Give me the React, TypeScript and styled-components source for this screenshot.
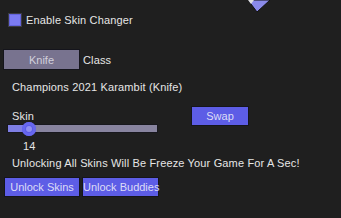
import React from 'react';
import styled, { createGlobalStyle } from 'styled-components';

const GlobalStyle = createGlobalStyle`
    html, body {
        margin: 0;
        padding: 0;
        background: #1f1f1f;
        overflow: hidden;
    }
    body {
        font-family: 'Liberation Sans', Arial, sans-serif;
        font-size: 11px;
        letter-spacing: 0.15px;
        color: #e6e6e6;
    }
`;

const Window = styled.div`
    position: relative;
    width: 341px;
    height: 218px;
    padding: 13px 0 0 8px;
    box-sizing: border-box;
`;

const Cursor = styled.svg`
    position: absolute;
    left: 247px;
    top: 0;
`;

const CheckRow = styled.label`
    display: flex;
    align-items: center;
    gap: 4px;
    height: 14px;
`;

const CheckBox = styled.span`
    width: 12px;
    height: 12px;
    border: 1px solid #3c3c44;
    background: #7b7bf2;
    box-shadow: inset 0 0 0 1px #6464dc;
`;

const Label = styled.span<{ indent?: number }>`
    display: block;
    line-height: 14px;
    white-space: nowrap;
    ${p => p.indent !== undefined && `margin-left: ${p.indent}px;`}
`;

const ClassRow = styled.div`
    display: flex;
    align-items: center;
    gap: 3px;
    margin: 22px 0 0 -5px;
`;

const Button = styled.button<{ variant?: 'gray' | 'accent'; w: number; h?: number }>`
    width: ${p => p.w}px;
    height: ${p => p.h ?? 20}px;
    padding: 0;
    border: 1px solid #15151c;
    font-family: inherit;
    font-size: 11px;
    letter-spacing: 0;
    white-space: nowrap;
    overflow: visible;
    background: ${p => (p.variant === 'gray' ? '#78738f' : '#5d5de6')};
    color: ${p => (p.variant === 'gray' ? '#d2d0dc' : '#dcdcf6')};
    cursor: pointer;
`;

const Title = styled(Label)`
    margin: 10px 0 0 4px;
`;

const SkinRow = styled.div`
    display: flex;
    align-items: flex-start;
    margin-top: 12px;
`;

const SliderColumn = styled.div`
    width: 151px;
    margin-left: -1px;
`;

const Track = styled.div`
    position: relative;
    height: 9px;
    margin-top: 1px;
    background: #88849f;
    border: 1px solid #18181e;
    box-sizing: border-box;
`;

const Fill = styled.div`
    height: 100%;
    background: #7f7fe4;
`;

const Knob = styled.div`
    position: absolute;
    top: 50%;
    width: 14px;
    height: 14px;
    margin: -7px 0 0 -7px;
    border-radius: 50%;
    background: #5b5be8;
    box-shadow: inset 0 0 0 3px #6767ee;
    &::after {
        content: '';
        position: absolute;
        inset: 4px;
        border-radius: 50%;
        background: #8f8ff0;
    }
`;

const SwapButton = styled(Button)`
    margin-left: 33px;
`;

const Warning = styled(Label)`
    margin: 3px 0 0 4px;
`;

const ButtonRow = styled.div`
    display: flex;
    gap: 2px;
    margin: 7px 0 0 -4px;
`;

const value = 14;
const min = 0;
const max = 100;

export default function App() {
    const pct = ((value - min) / (max - min)) * 100;
    return (
        <Window>
            <GlobalStyle />
            <Cursor width="25" height="14" viewBox="0 0 25 14">
                <polygon points="1,0 10,12 23,0" fill="#8a8aea" stroke="#111" strokeWidth="1" />
                <polygon points="1,0 4,4 7,0" fill="#e0e0e0" />
            </Cursor>
            <CheckRow>
                <CheckBox />
                <Label>Enable Skin Changer</Label>
            </CheckRow>
            <ClassRow>
                <Button variant="gray" w={77} h={21}>Knife</Button>
                <Label>Class</Label>
            </ClassRow>
            <Title>Champions 2021 Karambit (Knife)</Title>
            <SkinRow>
                <SliderColumn>
                    <Label indent={5} style={{ marginTop: 3 }}>Skin</Label>
                    <Track>
                        <Fill style={{ width: `${pct}%` }} />
                        <Knob style={{ left: `${pct}%` }} />
                    </Track>
                    <Label indent={16} style={{ marginTop: 6 }}>{value}</Label>
                </SliderColumn>
                <SwapButton w={58}>Swap</SwapButton>
            </SkinRow>
            <Warning>Unlocking All Skins Will Be Freeze Your Game For A Sec!</Warning>
            <ButtonRow>
                <Button w={76}>Unlock Skins</Button>
                <Button w={77}>Unlock Buddies</Button>
            </ButtonRow>
        </Window>
    );
}
